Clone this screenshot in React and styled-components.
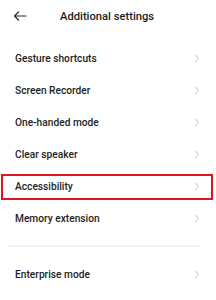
import React from "react";
import styled, { createGlobalStyle } from "styled-components";

const GlobalStyle = createGlobalStyle`
  html, body {
    margin: 0;
    padding: 0;
    background: #ffffff;
  }
  body {
    font-family: Roboto, "Noto Sans", "Liberation Sans", sans-serif;
    color: #1f1f1f;
  }
`;

const items = [
  { label: "Gesture shortcuts" },
  { label: "Screen Recorder" },
  { label: "One-handed mode" },
  { label: "Clear speaker" },
  { label: "Accessibility", highlighted: true },
  { label: "Memory extension" },
];

const Chevron = () => (
  <svg width="6" height="9" viewBox="0 0 6 9" fill="none">
    <path d="M1.4 1.2L4.4 4.5L1.4 7.8" stroke="#c2c2c2" strokeWidth="1" strokeLinecap="round" strokeLinejoin="round" />
  </svg>
);

const BackArrow = () => (
  <svg width="14" height="10" viewBox="0 0 14 10" fill="none">
    <path d="M13 5H1.5M5.5 1L1.5 5L5.5 9" stroke="#2a2a2a" strokeWidth="1.2" strokeLinecap="round" strokeLinejoin="round" />
  </svg>
);

export default function App() {
  return (
    <>
      <GlobalStyle />
      <Page>
        <Header>
          <BackButton>
            <BackArrow />
          </BackButton>
          <Title>Additional settings</Title>
        </Header>
        <List>
          {items.map((item) => (
            <Row key={item.label} highlighted={item.highlighted}>
              <Label>{item.label}</Label>
              <Chevron />
            </Row>
          ))}
        </List>
        <Divider />
        <List>
          <Row>
            <Label>Enterprise mode</Label>
            <Chevron />
          </Row>
        </List>
      </Page>
    </>
  );
}

const Page = styled.div`
  width: 216px;
  height: 300px;
  overflow: hidden;
  background: #fff;
`;

const Header = styled.div`
  display: flex;
  align-items: center;
  height: 32px;
  padding-left: 13px;
`;

const BackButton = styled.div`
  display: flex;
  align-items: center;
  width: 14px;
  height: 14px;
  margin-right: 33px;
`;

const Title = styled.div`
  font-size: 11.2px;
  font-weight: 500;
  color: #1c1c1c;
`;

const List = styled.div`
  display: flex;
  flex-direction: column;
  padding-top: 10px;
`;

const Row = styled.div`
  position: relative;
  display: flex;
  align-items: center;
  justify-content: space-between;
  height: 32px;
  padding: 0 16px 0 15px;

  ${(p) =>
    p.highlighted &&
    `
    &::after {
      content: "";
      position: absolute;
      left: 1px;
      right: 3px;
      top: 4px;
      bottom: 2px;
      border: 2.5px solid #e0141e;
      pointer-events: none;
    }
  `}
`;

const Label = styled.span`
  font-size: 10.2px;
  font-weight: 500;
  color: #1e1e1e;
`;

const Divider = styled.div`
  height: 2px;
  margin: 11px 16px 1px 8px;
  background: #f3f3f3;
`;
